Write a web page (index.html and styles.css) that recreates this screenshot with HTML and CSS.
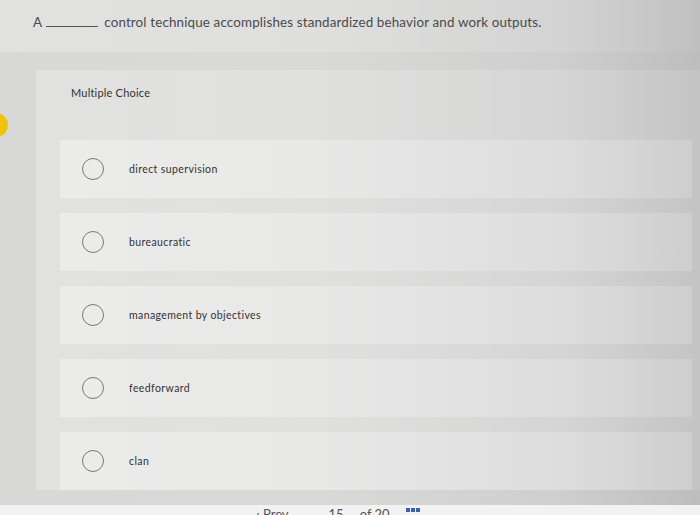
FILE: index.html
```
<!DOCTYPE html>
<html>
<head>
<meta charset="utf-8">
<link rel="stylesheet" href="styles.css">
</head>
<body>
<div class="page">
  <div class="question">
    <span>A</span><span class="blank"></span><span>control technique accomplishes standardized behavior and work outputs.</span>
  </div>
  <div class="card">
    <div class="card-head">Multiple Choice</div>
    <div class="options">
      <div class="option"><span class="radio"></span><span class="label">direct supervision</span></div>
      <div class="option"><span class="radio"></span><span class="label">bureaucratic</span></div>
      <div class="option"><span class="radio"></span><span class="label">management by objectives</span></div>
      <div class="option"><span class="radio"></span><span class="label">feedforward</span></div>
      <div class="option"><span class="radio"></span><span class="label">clan</span></div>
    </div>
  </div>
  <div class="footer">
    <span class="f-prev">&lsaquo; Prev</span>
    <span class="f-num">15</span>
    <span class="f-of">of 20</span>
    <span class="f-grid"><i></i><i></i><i></i></span>
  </div>
  <span class="dot"></span>
</div>
</body>
</html>
```
FILE: styles.css
```
html, body {
  margin: 0;
  padding: 0;
}
body {
  width: 700px;
  height: 515px;
  overflow: hidden;
  font-family: "Lato", "Open Sans", sans-serif;
  background: linear-gradient(90deg, #d8d8d6 0%, #d9d9d8 45%, #cfcfcf 80%, #bdbdbd 100%);
}
.page {
  position: relative;
  height: 515px;
  display: flex;
  flex-direction: column;
}
.question {
  height: 52px;
  box-sizing: border-box;
  padding: 14px 0 0 33px;
  display: flex;
  align-items: baseline;
  font-size: 13.4px;
  letter-spacing: 0.15px;
  color: #4a4a4a;
  background: linear-gradient(90deg, rgba(255,255,255,0.25), rgba(255,255,255,0.05));
}
.blank {
  display: inline-block;
  width: 52px;
  height: 1px;
  border-bottom: 1px solid #555;
  margin: 0 6px 0 4px;
}
.card {
  margin: 18px 0 0 36px;
  height: 420px;
  background: linear-gradient(90deg, rgba(255,255,255,0.24), rgba(255,255,255,0.1));
  display: flex;
  flex-direction: column;
}
.card-head {
  height: 54px;
  box-sizing: border-box;
  padding: 16px 0 0 35px;
  font-size: 11px;
  letter-spacing: 0.2px;
  color: #333;
}
.options {
  display: flex;
  flex-direction: column;
  gap: 15px;
  padding: 20px 8px 0 24px;
}
.option {
  height: 58px;
  display: flex;
  align-items: center;
  padding-left: 22px;
  background: linear-gradient(90deg, rgba(255,255,255,0.34), rgba(255,255,255,0.16));
}
.radio {
  width: 22px;
  height: 22px;
  border: 1.6px solid #7a7a7a;
  border-radius: 50%;
  box-sizing: border-box;
  flex: none;
}
.label {
  margin-left: 25px;
  font-size: 10.5px;
  letter-spacing: 0.4px;
  color: #333;
}
.footer {
  margin-top: auto;
  height: 10px;
  overflow: hidden;
  background: #f2f2f2;
  display: flex;
  align-items: flex-start;
  padding-top: 3px;
  box-sizing: border-box;
  font-size: 13px;
  color: #555;
  line-height: 13px;
}
.f-prev { margin-left: 256px; }
.f-num { margin-left: 40px; }
.f-of { margin-left: 16px; }
.f-grid {
  margin-left: 16px;
  display: flex;
  gap: 1px;
}
.f-grid i {
  display: block;
  width: 4px;
  height: 4px;
  background: #3a5fb0;
}
.dot {
  position: absolute;
  left: -10px;
  top: 114px;
  width: 18px;
  height: 22px;
  border-radius: 50%;
  background: #f1c20a;
}
```
